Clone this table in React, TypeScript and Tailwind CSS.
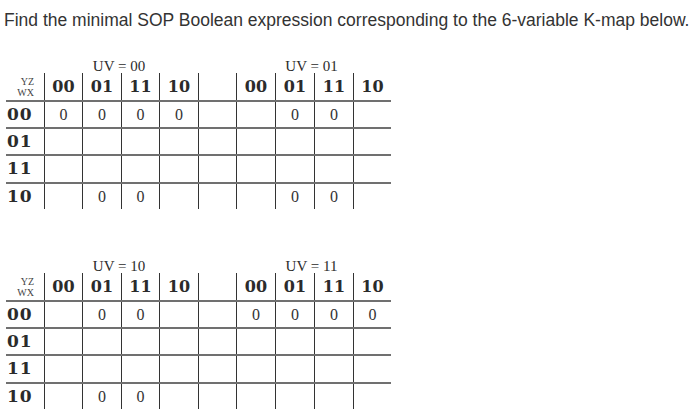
const COLS = ['00', '01', '11', '10']

type Cell = '' | '0'

const top: { label: string; a: Cell[]; b: Cell[] }[] = [
  { label: '00', a: ['0', '0', '0', '0'], b: ['', '0', '0', ''] },
  { label: '01', a: ['', '', '', ''], b: ['', '', '', ''] },
  { label: '11', a: ['', '', '', ''], b: ['', '', '', ''] },
  { label: '10', a: ['', '0', '0', ''], b: ['', '0', '0', ''] },
]

const bottom: { label: string; a: Cell[]; b: Cell[] }[] = [
  { label: '00', a: ['', '0', '0', ''], b: ['0', '0', '0', '0'] },
  { label: '01', a: ['', '', '', ''], b: ['', '', '', ''] },
  { label: '11', a: ['', '', '', ''], b: ['', '', '', ''] },
  { label: '10', a: ['', '0', '0', ''], b: ['', '', '', ''] },
]

const widths = ['w-[38px]', 'w-[39px]', 'w-[38px]', 'w-[39px]', 'w-[38px]', 'w-[39px]', 'w-[39px]', 'w-[39px]', 'w-[38px]']
const rowHeights = ['h-[27px]', 'h-[27px]', 'h-[28px]', 'h-[25px]']

function Row({ children, height, line }: { children: React.ReactNode; height: string; line: boolean }) {
  return (
    <div className={`flex w-fit ${height} ${line ? 'border-b-2 border-[#707070]' : ''}`}>
      {children}
    </div>
  )
}

function KMap({ uvA, uvB, rows }: { uvA: string; uvB: string; rows: typeof top }) {
  const header = [...COLS, '', ...COLS]
  return (
    <div className="font-['Liberation_Serif',serif] text-[#2b2b2b]">
      <div className="flex h-[14px] text-[15px] leading-[14px]">
        <div className="w-[36px]" />
        <div className="w-[154px] text-center">{uvA}</div>
        <div className="w-[38px]" />
        <div className="w-[155px] text-center">{uvB}</div>
      </div>
      <Row height="h-[29px]" line>
        <div className="w-[38px] flex flex-col items-end justify-center pr-[10px] text-[10px] leading-[11px] text-[#444]">
          <span>YZ</span>
          <span>WX</span>
        </div>
        {header.map((h, i) => (
          <div key={i} className={`${widths[i]} border-l border-[#333] flex items-center justify-center font-['DejaVu_Serif',serif] text-[16px] font-bold`}>
            {h}
          </div>
        ))}
      </Row>
      {rows.map((r, ri) => {
        const cells = [...r.a, '', ...r.b]
        return (
          <Row key={r.label} height={rowHeights[ri]} line={ri < 3}>
            <div className="w-[38px] flex items-center pl-[1px] font-['DejaVu_Serif',serif] text-[17px] font-bold tracking-[1px]">{r.label}</div>
            {cells.map((c, i) => (
              <div key={i} className={`${widths[i]} border-l border-[#333] flex items-center justify-center text-[16px] text-[#333]`}>
                {c}
              </div>
            ))}
          </Row>
        )
      })}
    </div>
  )
}

export default function App() {
  return (
    <div className="w-[700px] h-[420px] bg-white overflow-hidden">
      <p className="pt-[9px] pl-[4px] text-[17.5px] leading-[22px] text-[#333] font-['Liberation_Sans',sans-serif] whitespace-nowrap">
        Find the minimal SOP Boolean expression corresponding to the 6-variable K-map below.
      </p>
      <div className="pl-[6px] pt-[28px] flex flex-col gap-[50px]">
        <KMap uvA="UV = 00" uvB="UV = 01" rows={top} />
        <KMap uvA="UV = 10" uvB="UV = 11" rows={bottom} />
      </div>
    </div>
  )
}
